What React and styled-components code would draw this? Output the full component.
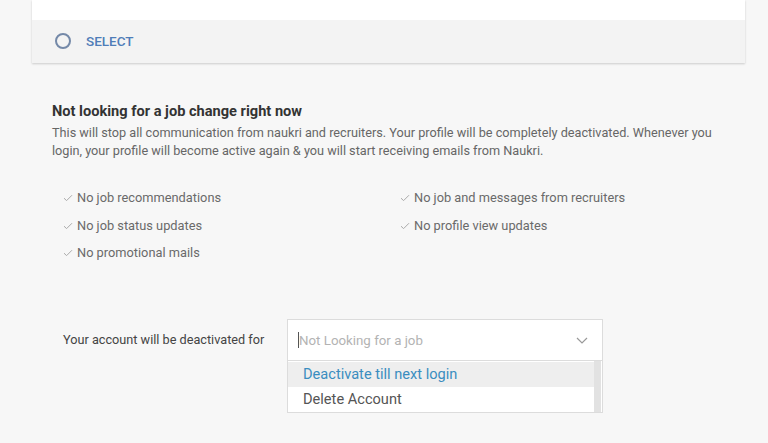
import React from 'react';
import styled, { createGlobalStyle } from 'styled-components';

const GlobalStyle = createGlobalStyle`
  html, body {
    margin: 0;
    padding: 0;
    background: #f7f7f7;
    font-family: Roboto, "Liberation Sans", Arial, sans-serif;
    overflow: hidden;
  }
`;

const Page = styled.div`
  width: 768px;
  height: 443px;
  background: #f7f7f7;
`;

const Card = styled.div`
  width: 713px;
  margin-left: 32px;
  background: #fff;
  box-shadow: 0 1px 2px rgba(0, 0, 0, 0.18);
`;

const CardTop = styled.div`
  height: 20px;
`;

const CardFooter = styled.div`
  height: 43px;
  background: #f3f3f3;
  display: flex;
  align-items: center;
  padding: 0 0 1px 23px;
  box-sizing: border-box;
`;

const Radio = styled.span`
  width: 16px;
  height: 16px;
  border: 2px solid #7489a8;
  border-radius: 50%;
  box-sizing: border-box;
`;

const SelectText = styled.span`
  margin-left: 15px;
  font-size: 13.5px;
  font-weight: 500;
  color: #4f7db8;
`;

const Section = styled.div`
  padding: 39px 0 0 52px;
`;

const Heading = styled.h3`
  margin: 0;
  font-size: 14.6px;
  line-height: 18px;
  font-weight: 700;
  color: #333;
`;

const Para = styled.p`
  margin: 4px 0 0;
  font-size: 12.7px;
  line-height: 18px;
  color: #666;
  width: 690px;
`;

const CheckGrid = styled.ul`
  list-style: none;
  margin: 29px 0 0;
  padding: 0 0 0 11px;
  display: grid;
  grid-template-columns: 337px 1fr;
  row-gap: 9.5px;
`;

const CheckItem = styled.li`
  display: flex;
  align-items: center;
  font-size: 12.8px;
  line-height: 18px;
  color: #6a6a6a;
`;

const Tick = styled.svg`
  width: 10px;
  height: 8px;
  margin-right: 4px;
  flex-shrink: 0;
`;

const Row = styled.div`
  margin-top: 57px;
  padding-left: 11px;
  display: flex;
  align-items: flex-start;
`;

const Label = styled.label`
  width: 224px;
  font-size: 12.7px;
  color: #444;
  line-height: 42px;
`;

const SelectWrap = styled.div`
  width: 316px;
`;

const SelectBox = styled.div`
  height: 42px;
  box-sizing: border-box;
  background: #fff;
  border: 1px solid #dcdcdc;
  display: flex;
  align-items: center;
  padding: 0 14px 0 10px;
`;

const Caret = styled.span`
  width: 1px;
  height: 16px;
  background: #555;
`;

const Placeholder = styled.span`
  flex: 1;
  font-size: 13.3px;
  color: #b3b3b3;
`;

const Menu = styled.ul`
  list-style: none;
  margin: 0;
  padding: 1px 8px 0 0;
  background: #fff;
  border: 1px solid #dcdcdc;
  border-top: none;
  position: relative;
`;

const Scrollbar = styled.span`
  position: absolute;
  right: 1px;
  top: 0;
  bottom: 0;
  width: 7px;
  background: #e2e2e2;
`;

const Option = styled.li`
  height: 25px;
  line-height: 25px;
  padding-left: 15px;
  font-size: 14.6px;
  color: ${(p) => (p.$active ? '#3a8dc0' : '#555')};
  background: ${(p) => (p.$active ? '#eeeeee' : '#fff')};
`;

const TickIcon = () => (
  <Tick viewBox="0 0 10 8">
    <path d="M1 4.2 L3.6 6.6 L9 1.2" fill="none" stroke="#aaa" strokeWidth="1" />
  </Tick>
);

const items = [
  'No job recommendations',
  'No job and messages from recruiters',
  'No job status updates',
  'No profile view updates',
  'No promotional mails',
];

export default function App() {
  return (
    <Page>
      <GlobalStyle />
      <Card>
        <CardTop />
        <CardFooter>
          <Radio />
          <SelectText>SELECT</SelectText>
        </CardFooter>
      </Card>

      <Section>
        <Heading>Not looking for a job change right now</Heading>
        <Para>
          This will stop all communication from naukri and recruiters. Your profile will be completely deactivated. Whenever you
          login, your profile will become active again &amp; you will start receiving emails from Naukri.
        </Para>

        <CheckGrid>
          {items.map((t) => (
            <CheckItem key={t}>
              <TickIcon />
              {t}
            </CheckItem>
          ))}
        </CheckGrid>

        <Row>
          <Label>Your account will be deactivated for</Label>
          <SelectWrap>
            <SelectBox>
              <Caret />
              <Placeholder>Not Looking for a job</Placeholder>
              <svg width="12" height="7" viewBox="0 0 12 7">
                <path d="M1 1 L6 6 L11 1" fill="none" stroke="#999" strokeWidth="1.2" />
              </svg>
            </SelectBox>
            <Menu>
              <Option $active>Deactivate till next login</Option>
              <Option>Delete Account</Option>
              <Scrollbar />
            </Menu>
          </SelectWrap>
        </Row>
      </Section>
    </Page>
  );
}
